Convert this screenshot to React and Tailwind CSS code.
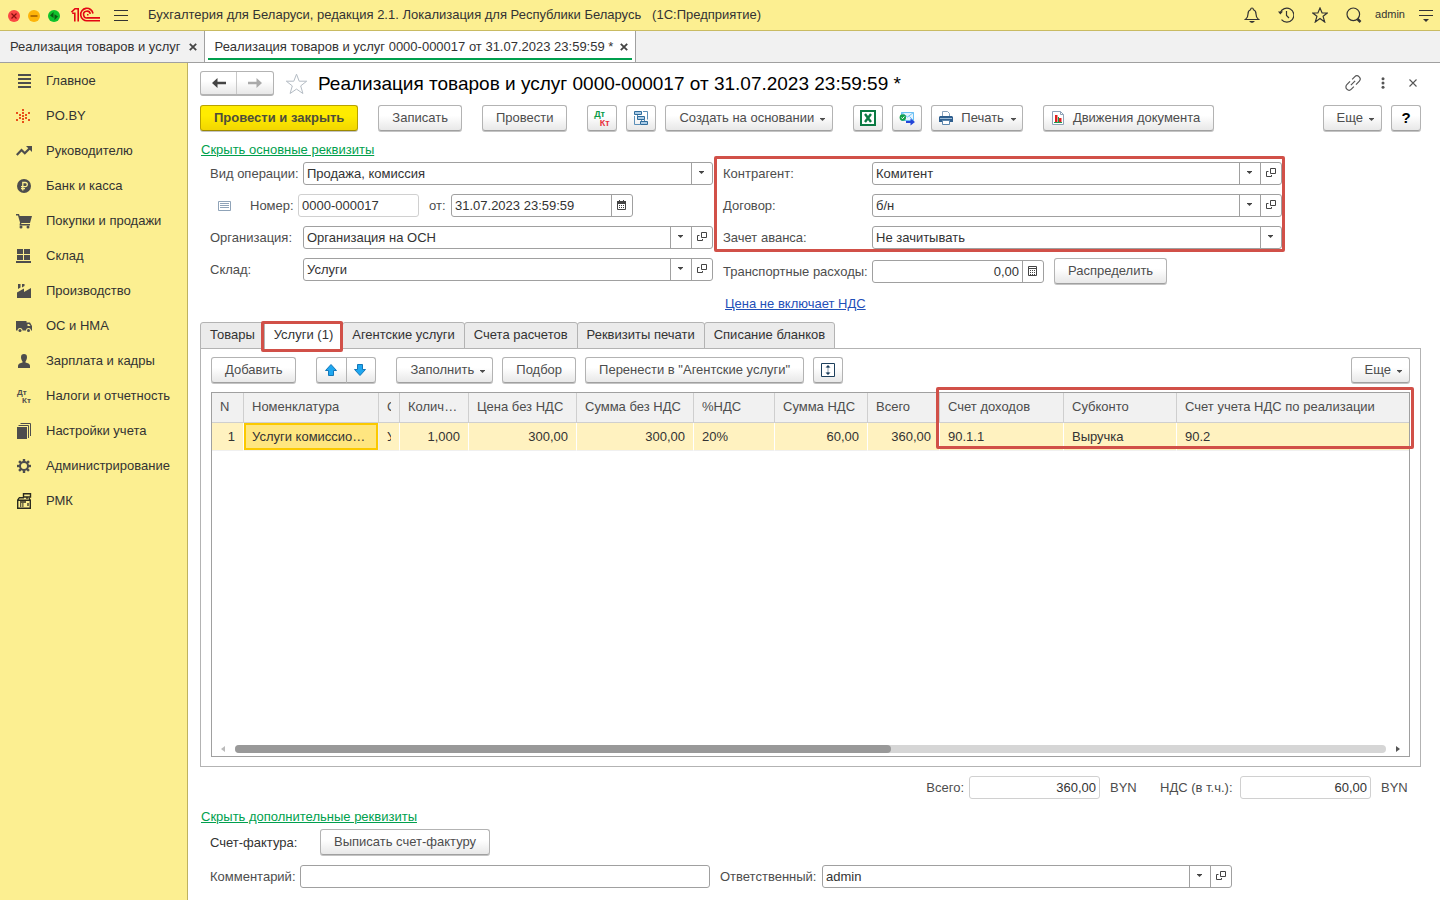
import React from "react";

/* ---------- icons ---------- */

const Ico = ({ children, s = 16, className = "" }) => (
  <svg width={s} height={s} viewBox={`0 0 ${s} ${s}`} className={`shrink-0 ${className}`} aria-hidden="true">
    {children}
  </svg>
);

const Caret = ({ className = "" }) => (
  <svg width="5" height="3" viewBox="0 0 5 3" className={`shrink-0 ${className}`} aria-hidden="true">
    <path d="M0 0h5v.5L2.500 3 0 .5z" fill="currentColor" />
  </svg>
);

const OpenIcon = () => (
  <svg width="10" height="9" viewBox="0 0 10 9" fill="none" stroke="#444" aria-hidden="true">
    <path d="M4.500 0.500h5v5h-5zM2.500 3.500h-2v5h5v-1.500" />
  </svg>
);

const Logo = () => (
  <svg width="30" height="16" viewBox="0 0 30 16" fill="none" stroke="#e30613" strokeWidth="1.600" aria-label="1С">
    <path d="M0.500 5.200 4 1.800h3.200V14.500M1.200 6.200h2.600V14.500" />
    <path d="M22 6.500A6.200 6.200 0 1 0 16.500 13.700H29" />
    <path d="M19.300 6.900A3.400 3.400 0 1 0 16.500 10.900H29" />
    <path d="M17.500 7.800h-1.500" />
  </svg>
);

const DtKt = ({ top, bottom, s = 16 }) => (
  <svg width={s} height={s} viewBox="0 0 16 16" className="shrink-0" aria-hidden="true" fontFamily="Liberation Sans, Arial, sans-serif" fontWeight="700" fontSize="8">
    <text x="1" y="7" fill={top}>Дт</text>
    <text x="6" y="15" fill={bottom}>Кт</text>
  </svg>
);

const PO_DOTS = [[0, 3], [0, 10], [3, 5], [3, 8], [6, 0], [6, 3], [6, 6], [6, 9], [6, 12], [9, 5], [9, 8], [12, 3], [12, 10]];
const TEETH = [0, 45, 90, 135, 180, 225, 270, 315];

const icons = {
  main: <Ico><path d="M2 1h13v2H2zM2 5h13v2H2zM2 9h13v2H2zM2 13h13v2H2z" fill="#4d4d4d" /></Ico>,
  po: <Ico>{PO_DOTS.map(([x, y]) => <rect key={`${x}-${y}`} x={x} y={y + 1} width="2" height="2" fill="#e8501a" />)}</Ico>,
  trend: <Ico><path d="M0.800 12 5.500 7l3.300 3.300L14 5" fill="none" stroke="#4d4d4d" strokeWidth="2.200" /><path d="M10 3h6v6z" fill="#4d4d4d" /></Ico>,
  bank: <Ico><circle cx="8" cy="8" r="7" fill="#4d4d4d" /><path d="M6.800 12.500V4.500h2.400a2 2 0 0 1 0 4.200H5M5 10.700h4" fill="none" stroke="#fcef91" strokeWidth="1.300" /></Ico>,
  cart: <Ico><path d="M0 1h3l.7 2H16l-2 7H5.500l-.4 1H14v1.400H3.500L4 9.500 2 2.400H0z" fill="#4d4d4d" /><circle cx="5" cy="14" r="1.500" fill="#4d4d4d" /><circle cx="12" cy="14" r="1.500" fill="#4d4d4d" /></Ico>,
  stock: <Ico><path d="M1 1h6v5H1zM8 1h6v5H8zM1 7h6v5H1zM8 7h6v5H8zM0 13h15v2H0z" fill="#4d4d4d" /></Ico>,
  factory: <Ico><path d="M1 15V9.500L8 5.500v3.500L15 5v10zM2 1h2.500v3.500L2 6zM6 1h2.500v2L6 4.500z" fill="#4d4d4d" /></Ico>,
  truck: <Ico><path d="M0 3h10.500v1.500h3.500L16 8v4.500H0z" fill="#4d4d4d" /><path d="M11.500 6H13l1.500 2h-3z" fill="#fcef91" /><circle cx="4" cy="12.500" r="2.500" fill="#fcef91" /><circle cx="12.500" cy="12.500" r="2.500" fill="#fcef91" /><circle cx="4" cy="12.500" r="1.500" fill="#4d4d4d" /><circle cx="12.500" cy="12.500" r="1.500" fill="#4d4d4d" /></Ico>,
  person: <Ico><path d="M8 1a3 3.300 0 0 1 3 3.300C11 6.500 9.800 8 9.500 8.500v1c2 .4 4.500 1.200 4.500 3.200V15H2v-2.300c0-2 2.500-2.800 4.500-3.200v-1C6.200 8 5 6.500 5 4.300A3 3.300 0 0 1 8 1z" fill="#4d4d4d" /></Ico>,
  tax: <DtKt top="#4d4d4d" bottom="#4d4d4d" />,
  books: <Ico><path d="M1 4h10v12H1z" fill="#4d4d4d" /><path d="M2.500 2.500h10V15M4.500 0.500h10V13" fill="none" stroke="#4d4d4d" /></Ico>,
  gear: (
    <Ico>
      <circle cx="8" cy="8" r="4" fill="none" stroke="#4d4d4d" strokeWidth="2" />
      {TEETH.map((a) => <path key={a} d="M6.800 1h2.400v3H6.800z" transform={`rotate(${a} 8 8)`} fill="#4d4d4d" />)}
    </Ico>
  ),
  pos: (
    <Ico>
      <path d="M7.500 .7h7v3.300h-7zM11 4v2M3 4.700h5M1.700 7.200h12.600v8H1.700zM1.700 7.500 3 4.700M14.300 7.500 13 5" fill="none" stroke="#2b2b1f" strokeWidth="1.400" />
      <path d="M4 9h6M4 11h1.300M6.200 11h1.300M4 13h1.300M6.200 13h1.300M12 10v3" stroke="#2b2b1f" strokeWidth="1.300" />
    </Ico>
  ),
};

const NAV = [
  ["main", "Главное"], ["po", "PO.BY"], ["trend", "Руководителю"], ["bank", "Банк и касса"],
  ["cart", "Покупки и продажи"], ["stock", "Склад"], ["factory", "Производство"], ["truck", "ОС и НМА"],
  ["person", "Зарплата и кадры"], ["tax", "Налоги и отчетность"], ["books", "Настройки учета"],
  ["gear", "Администрирование"], ["pos", "РМК"],
];

/* ---------- controls ---------- */

const BTN_SHAPE = "mb-px flex h-[26px] shrink-0 items-center justify-center whitespace-nowrap rounded-[3px] border pb-px shadow-[0_1px_0_#c4c4c4]";
const BTN = `${BTN_SHAPE} border-[#b3b3b3] border-b-[#a0a0a0] bg-linear-to-b from-white from-40% to-[#e8e8e8] text-[#4d4d4d]`;

const Btn = ({ children, className = "px-[13px]", ...rest }) => (
  <button type="button" className={`${BTN} ${className}`} {...rest}>{children}</button>
);

const MenuBtn = ({ children }) => (
  <Btn className="gap-[6px] pl-[13px] pr-[7px]">{children}<Caret className="mt-[4px]" /></Btn>
);

const BOX = "h-[23px] min-w-0 overflow-hidden rounded-[3px] border border-[#a0a0a0] bg-white text-[#333]";

const SelectField = ({ id, value, open, className = "" }) => (
  <div className={`flex ${BOX} ${className}`}>
    <div className="grid min-w-0 flex-1 grid-cols-[1fr_21px]">
      <select id={id} defaultValue={value} className="col-start-1 col-end-3 row-start-1 h-[21px] w-full appearance-none bg-transparent pl-[3px] pr-6 outline-none">
        <option>{value}</option>
      </select>
      <span className="pointer-events-none col-start-2 row-start-1 flex items-center justify-center border-l border-[#a0a0a0] pb-[2px] pr-px text-[#444]">
        <Caret />
      </span>
    </div>
    {open && (
      <button type="button" aria-label="Открыть" className="flex w-[21px] items-center justify-center border-l border-[#a0a0a0] pb-[2px]">
        <OpenIcon />
      </button>
    )}
  </div>
);

const InputField = ({ id, value, icon, label, className = "", inputClass = "" }) => (
  <div className={`flex ${BOX} ${className}`}>
    <input id={id} defaultValue={value} className={`w-full min-w-0 flex-1 bg-transparent px-[3px] outline-none ${inputClass}`} />
    {icon && (
      <button type="button" aria-label={label} className="flex w-[21px] shrink-0 items-center justify-center border-l border-[#a0a0a0] pb-[2px] pr-px">{icon}</button>
    )}
  </div>
);

const ReadOnly = ({ id, value, className = "" }) => (
  <input id={id} readOnly value={value} className={`h-[23px] min-w-0 rounded-[3px] border border-[#d0d0d0] bg-white px-[3px] text-[#333] outline-none ${className}`} />
);

const Calendar = () => (
  <svg width="9" height="10" viewBox="0 0 9 10" aria-hidden="true">
    <path d="M0.500 2.500h8v7h-8z" fill="none" stroke="#444" />
    <path d="M0 1h9v3H0zM2 0h1v1H2zM6 0h1v1H6zM2 5h1v1H2zM4 5h1v1H4zM6 5h1v1H6zM2 7h1v1H2zM4 7h1v1H4zM6 7h1v1H6z" fill="#444" />
  </svg>
);

const Calc = () => (
  <svg width="9" height="10" viewBox="0 0 9 10" aria-hidden="true">
    <path d="M0.500 0.500h8v9h-8zM0 2.500h9" fill="none" stroke="#444" />
    <path d="M2 4h1v1H2zM4 4h1v1H4zM6 4h1v1H6zM2 6h1v1H2zM4 6h1v1H4zM6 6h1v1H6zM2 8h1v1H2zM4 8h1v1H4zM6 8h1v1H6z" fill="#444" />
  </svg>
);

const MARK = "pointer-events-none absolute border-[3px] border-[#d15048] rounded-[2px]";

/* ---------- page parts ---------- */

function TopBar() {
  return (
    <header className="flex h-[31px] items-center border-b border-[#c9bb62] bg-[#fcef91] pl-2 pr-[7px] text-[#333]">
      <div className="flex gap-2 pt-px">
        <button type="button" aria-label="Закрыть" className="block">
          <svg width="12" height="12" viewBox="0 0 12 12"><circle cx="6" cy="6" r="6" fill="#fa4844" /><path d="m3.500 3.500 5 5m0-5-5 5" stroke="#8a1010" strokeWidth="1.200" /></svg>
        </button>
        <button type="button" aria-label="Свернуть" className="block">
          <svg width="12" height="12" viewBox="0 0 12 12"><circle cx="6" cy="6" r="6" fill="#fdb40a" /><path d="M2.500 6h7" stroke="#9a5a00" strokeWidth="1.500" /></svg>
        </button>
        <button type="button" aria-label="Развернуть" className="block">
          <svg width="12" height="12" viewBox="0 0 12 12"><circle cx="6" cy="6" r="6" fill="#0fc22c" /><path d="M5.500 2v6L2 5.500zM6.500 10V4.200L10 6.500z" fill="#0a5a12" /></svg>
        </button>
      </div>
      <div className="ml-[11px]"><Logo /></div>
      <button type="button" aria-label="Меню" className="ml-[13px] pt-px">
        <svg width="14" height="12" viewBox="0 0 14 12" stroke="#333"><path d="M0 .5h14M0 5.500h14M0 10.500h14" /></svg>
      </button>
      <div className="ml-5 flex-1 truncate whitespace-pre pb-px">Бухгалтерия для Беларуси, редакция 2.1. Локализация для Республики Беларусь   (1С:Предприятие)</div>
      <div className="flex items-center gap-[18px]">
        <button type="button" aria-label="Уведомления">
          <Ico><path d="M1.500 12.500h13c-2-1.500-2.500-3-2.500-5.500 0-2-1.200-3.700-2.500-4.200C9.300 1.500 9 1 8 1s-1.300.5-1.500 1.800C5.200 3.300 4 5 4 7c0 2.500-.5 4-2.500 5.500z" fill="none" stroke="#333" strokeWidth="1.200" /><path d="M5 14h6l-2 1.800H7z" fill="#333" /></Ico>
        </button>
        <button type="button" aria-label="История">
          <Ico><path d="M2.200 6A7 7 0 1 1 3.500 12.700" fill="none" stroke="#333" strokeWidth="1.200" /><path d="M0 4.500h5L2.300 7.500z" fill="#333" /><path d="M8.500 4v4.500l2.500 2.500" fill="none" stroke="#333" strokeWidth="1.200" /></Ico>
        </button>
        <button type="button" aria-label="Избранное">
          <Ico><path d="m8 1 2.100 5h5.200l-4.200 3.300L12.700 15 8 11.600 3.300 15l1.600-5.700L.7 6h5.200z" fill="none" stroke="#333" strokeWidth="1.200" /></Ico>
        </button>
        <button type="button" aria-label="Поиск">
          <Ico><circle cx="7.300" cy="7.300" r="6.300" fill="none" stroke="#333" strokeWidth="1.200" /><path d="m11.500 12 3 3" stroke="#333" strokeWidth="2.500" /></Ico>
        </button>
      </div>
      <span className="ml-[13px] pb-[3px] text-[11px] leading-4">admin</span>
      <button type="button" aria-label="Настройки окна" className="ml-[14px] pt-px">
        <svg width="14" height="14" viewBox="0 0 14 14"><path d="M0 1.500h14M0 6.500h14" stroke="#333" strokeWidth="1.200" /><path d="M4 10h6l-3 3z" fill="#333" /></svg>
      </button>
    </header>
  );
}

function CloseX() {
  return (
    <button type="button" aria-label="Закрыть вкладку">
      <svg width="8" height="8" viewBox="0 0 8 8"><path d="m.8.8 6.400 6.400m0-6.400L.8 7.200" stroke="#444" strokeWidth="1.800" /></svg>
    </button>
  );
}

function WindowTabs() {
  return (
    <div className="flex h-8 border-b border-[#a0a0a0] bg-[#f1f1f1] text-[#333]">
      <div className="flex items-center gap-2 border-r border-[#a0a0a0] pl-[10px] pr-[7px]">
        <span>Реализация товаров и услуг</span><CloseX />
      </div>
      <div className="flex flex-col border-r border-[#a0a0a0] bg-white px-[3px] pb-[2px]">
        <div className="flex flex-1 items-center gap-[7px] border-b-2 border-[#009f4d] pl-[7px] pr-[4px] pt-1">
          <span>Реализация товаров и услуг 0000-000017 от 31.07.2023 23:59:59 *</span><CloseX />
        </div>
      </div>
    </div>
  );
}

function Sidebar() {
  return (
    <nav className="w-[188px] shrink-0 border-r border-[#bfb260] bg-[#fcef91]">
      {NAV.map(([icon, text]) => (
        <a key={text} href="#" className="flex h-[35px] items-center gap-[14px] pl-4 text-[#333]">
          {icons[icon]}
          <span>{text}</span>
        </a>
      ))}
    </nav>
  );
}

function TitleRow() {
  return (
    <div className="flex h-[25px] items-center">
      <div className="flex h-[25px] rounded-[3px] border border-b-2 border-[#b3b3b3] bg-linear-to-b from-white from-40% to-[#e8e8e8]">
        <button type="button" aria-label="Назад" className="flex w-9 items-center justify-center border-r border-[#c8c8c8]">
          <svg width="14" height="10" viewBox="0 0 14 10"><path d="M0 5 5.500 0v3.700H14v2.600H5.500V10z" fill="#444" /></svg>
        </button>
        <button type="button" aria-label="Вперед" className="flex w-9 items-center justify-center">
          <svg width="14" height="10" viewBox="0 0 14 10"><path d="M14 5 8.500 0v3.700H0v2.600h8.500V10z" fill="#aaa" /></svg>
        </button>
      </div>
      <button type="button" aria-label="В избранное" className="ml-[11px]">
        <svg width="23" height="22" viewBox="0 0 23 22"><path d="m11.500 1.200 2.700 7h7.500l-6 4.700 2.200 7.600-6.400-4.400-6.400 4.400 2.200-7.600-6-4.700h7.500z" fill="#fff" stroke="#b4bcc4" /></svg>
      </button>
      <h1 className="ml-[10px] flex-1 truncate text-[19px] leading-6 text-black">Реализация товаров и услуг 0000-000017 от 31.07.2023 23:59:59 *</h1>
      <div className="flex items-center pb-[2px] pr-[3px]">
        <button type="button" aria-label="Ссылка">
          <Ico><g transform="rotate(-45 8 8)" fill="none" stroke="#555" strokeWidth="1.200"><path d="M7 4.800H2.500a3.200 3.200 0 0 0 0 6.400H6M9 11.200h4.500a3.200 3.200 0 0 0 0-6.400H10M5 8h6" /></g></Ico>
        </button>
        <button type="button" aria-label="Дополнительно" className="ml-5">
          <svg width="4" height="12" viewBox="0 0 4 12" fill="#555"><circle cx="2" cy="1.700" r="1.500" /><circle cx="2" cy="6" r="1.500" /><circle cx="2" cy="10.300" r="1.500" /></svg>
        </button>
        <button type="button" aria-label="Закрыть" className="ml-6 mr-px">
          <svg width="8" height="8" viewBox="0 0 8 8" stroke="#555" strokeWidth="1.100"><path d="m.5.5 7 7m0-7-7 7" /></svg>
        </button>
      </div>
    </div>
  );
}

function CommandBar() {
  return (
    <div className="mt-[9px] flex gap-5">
      <button type="button" className={`${BTN_SHAPE} border-[#b8a200] border-b-[#9c8900] bg-linear-to-b from-[#ffec00] from-40% to-[#f2d600] px-[13px] font-bold text-[#4d4d3a]`}>
        Провести и закрыть
      </button>
      <Btn>Записать</Btn>
      <Btn>Провести</Btn>
      <div className="flex gap-[9px]">
        <Btn className="w-[30px]" aria-label="Дт Кт"><DtKt top="#0a9a48" bottom="#e8303c" s={18} /></Btn>
        <Btn className="w-[30px]" aria-label="Структура подчиненности">
          <Ico>
            <path d="M10 1.500h4.500v8M1.500 6v8.500H7M4.500 4v3M11.500 9.500v2.500M8.500 9v2.500" fill="none" stroke="#5b8fb8" />
            <path d="M1.500 1.500h7v3h-7zM4.500 6.500h7v3h-7zM7.500 11.500h7v3h-7z" fill="#a9cbe6" stroke="#2f6c9c" />
          </Ico>
        </Btn>
        <MenuBtn>Создать на основании</MenuBtn>
      </div>
      <div className="flex gap-[9px]">
        <Btn className="w-[30px]" aria-label="Excel">
          <Ico><path d="M1 1h14v14H1z" fill="#fff" stroke="#0b7a43" strokeWidth="2" /><path d="m5 4 6 8m0-8-6 8" stroke="#0b7a43" strokeWidth="2.400" /></Ico>
        </Btn>
        <Btn className="w-[30px]" aria-label="Отправить">
          <Ico><path d="M2.500 2.500h12v8h-12z" fill="#e4f3fd" stroke="#6cc0f4" /><path d="m2.500 2.500 6 4.500 6-4.500M14.500 10.500l-4-4" fill="none" stroke="#6cc0f4" /><circle cx="3.800" cy="7.500" r="3.200" fill="#12a04a" /><path d="m2.500 7.500 1 1.200 1.800-2.200" fill="none" stroke="#fff" /><path d="M7 11h4.500V8.500L16 12l-4.500 3.500V13H7z" fill="#2344d8" /></Ico>
        </Btn>
        <Btn className="gap-[7px] pl-[6px] pr-[6px]">
          <Ico><path d="M4.500 6V1.500h5l2 2V6" fill="#fff" stroke="#8aa3bd" /><path d="M2 6h12l1 1v5H1V7z" fill="#2f5f8f" /><path d="M2 8h12v1H2z" fill="#9dbbd6" /><path d="M4.500 10.500h7v4h-7z" fill="#fff" stroke="#5c86ad" /></Ico>
          <span>Печать</span>
          <Caret className="mt-[4px]" />
        </Btn>
      </div>
      <Btn className="gap-[7px] pl-[6px] pr-[13px]">
        <Ico><path d="M2.500 1.500h8l3 3v10h-11z" fill="#fff" stroke="#8fa3b8" /><path d="M10.500 1.500v3h3" fill="none" stroke="#8fa3b8" /><path d="M5 5h2.500v7H5z" fill="#e02020" /><path d="M8 7h1v5H8z" fill="#1d9a4c" /><path d="M9 8h2.500v4H9z" fill="#e02020" /><path d="M4 12h8v1H4z" fill="#1d9a4c" /></Ico>
        <span>Движения документа</span>
      </Btn>
      <div className="ml-auto flex gap-[9px]">
        <MenuBtn>Еще</MenuBtn>
        <Btn className="w-[30px] text-[15px] font-bold text-black">?</Btn>
      </div>
    </div>
  );
}

const Label = ({ htmlFor, children, className }) => (
  <label htmlFor={htmlFor} className={`shrink-0 whitespace-nowrap text-[#4d4d4d] ${className}`}>{children}</label>
);

function Details() {
  return (
    <div className="mt-1 grid grid-cols-[513fr_559fr_129fr] gap-x-[10px]">
      <div className="flex flex-col gap-[9px] pl-[10px]">
        <div className="flex items-center">
          <Label htmlFor="op" className="w-[93px]">Вид операции:</Label>
          <SelectField id="op" value="Продажа, комиссия" className="flex-1" />
        </div>
        <div className="flex items-center">
          <svg width="13" height="10" viewBox="0 0 13 10" className="ml-2 shrink-0" aria-hidden="true"><path d="M.5.5h12v9H.5z" fill="#fff" stroke="#8fa3b8" /><path d="M2 2.500h9M2 4.500h9M2 6.500h9" stroke="#8fa3b8" /></svg>
          <Label htmlFor="num" className="ml-[19px] w-12">Номер:</Label>
          <ReadOnly id="num" value="0000-000017" className="w-[121px]" />
          <Label htmlFor="date" className="ml-[10px] w-[22px]">от:</Label>
          <InputField id="date" value="31.07.2023 23:59:59" icon={<Calendar />} label="Календарь" className="w-[182px]" />
        </div>
        <div className="flex items-center">
          <Label htmlFor="org" className="w-[93px]">Организация:</Label>
          <SelectField id="org" value="Организация на ОСН" open className="flex-1" />
        </div>
        <div className="flex items-center">
          <Label htmlFor="wh" className="w-[93px]">Склад:</Label>
          <SelectField id="wh" value="Услуги" open className="flex-1" />
        </div>
      </div>
      <div className="flex flex-col gap-[9px]">
        <div className="relative flex flex-col gap-[9px]">
          <div className="flex items-center">
            <Label htmlFor="contr" className="w-[149px]">Контрагент:</Label>
            <SelectField id="contr" value="Комитент" open className="flex-1" />
          </div>
          <div className="flex items-center">
            <Label htmlFor="deal" className="w-[149px]">Договор:</Label>
            <SelectField id="deal" value="б/н" open className="flex-1" />
          </div>
          <div className="flex items-center">
            <Label htmlFor="adv" className="w-[149px]">Зачет аванса:</Label>
            <SelectField id="adv" value="Не зачитывать" className="flex-1" />
          </div>
          <div className={`${MARK} -bottom-[3px] -left-[9px] -right-[3px] -top-[6px]`} />
        </div>
        <div className="flex items-center">
          <Label htmlFor="trans" className="w-[149px]">Транспортные расходы:</Label>
          <InputField id="trans" value="0,00" icon={<Calc />} label="Калькулятор" className="w-[172px]" inputClass="text-right" />
          <Btn className="ml-[10px] px-[13px]">Распределить</Btn>
        </div>
        <a href="#" className="ml-[2px] mt-[2px] self-start text-[#1f4fb8] underline">Цена не включает НДС</a>
      </div>
    </div>
  );
}

const TABS = ["Товары", "Услуги (1)", "Агентские услуги", "Счета расчетов", "Реквизиты печати", "Списание бланков"];

function TabStrip() {
  return (
    <div role="tablist" className="relative -mb-px mt-[10px] flex">
      {TABS.map((t, i) =>
        i === 1 ? (
          <button key={t} type="button" role="tab" aria-selected="true" className="relative -ml-px h-[27px] whitespace-nowrap border border-b-0 border-[#b3b3b3] bg-white px-[9px] pb-[2px] text-[#333]">
            {t}
            <span className={`${MARK} -bottom-[3px] -left-[4px] -right-px -top-[2px]`} />
          </button>
        ) : (
          <button key={t} type="button" role="tab" aria-selected="false" className="-ml-px h-[27px] whitespace-nowrap rounded-t-[3px] border border-[#b3b3b3] bg-[#ebebeb] px-[9px] pb-[2px] text-[#333] first:ml-0">
            {t}
          </button>
        )
      )}
    </div>
  );
}

const COLS = [
  ["N", "1", "w-[32px]", true], ["Номенклатура", "Услуги комиссио…", "w-[135px]"], ["С", "У", "w-[21px]"],
  ["Колич…", "1,000", "w-[69px]", true], ["Цена без НДС", "300,00", "w-[108px]", true], ["Сумма без НДС", "300,00", "w-[117px]", true],
  ["%НДС", "20%", "w-[81px]"], ["Сумма НДС", "60,00", "w-[93px]", true], ["Всего", "360,00", "w-[72px]", true],
  ["Счет доходов", "90.1.1", "w-[124px]"], ["Субконто", "Выручка", "w-[113px]"], ["Счет учета НДС по реализации", "90.2", ""],
];

function ItemsTable() {
  return (
    <div className="relative mt-2 flex min-h-[120px] flex-1 flex-col border border-[#a0a0a0]">
      <table className="w-full table-fixed border-separate border-spacing-0">
        <colgroup>{COLS.map((c) => <col key={c[0]} className={c[2]} />)}</colgroup>
        <thead>
          <tr className="h-[30px]">
            {COLS.map(([h], i) => (
              <th key={h} className={`overflow-hidden whitespace-nowrap border-b border-r border-[#cfcfcf] bg-[#f1f1f1] pb-[2px] pl-2 pt-0 text-left font-normal text-[#4d4d4d] last:border-r-0 ${i === 2 ? "pr-2" : "pr-1"}`}>
                {i === 2 ? <span className="block overflow-hidden">{h}</span> : h}
              </th>
            ))}
          </tr>
        </thead>
        <tbody>
          <tr className="h-[28px]">
            {COLS.map(([h, v, , right], i) =>
              i === 1 ? (
                <td key={h} className="border-b border-r border-[#f0f0f0] bg-[#fff2c0] p-0 text-[#333]">
                  <span className="block h-[27px] overflow-hidden whitespace-nowrap border-2 border-[#fbc900] bg-[#ffe680] pl-[6px] leading-[23px]">{v}</span>
                </td>
              ) : (
                <td key={h} className={`overflow-hidden whitespace-nowrap border-b border-r border-b-[#f0f0f0] border-r-white bg-[#fff2c0] py-0 pl-2 text-[#333] last:border-r-0 ${right ? "pr-2 text-right" : "pr-2"}`}>
                  {i === 2 ? <span className="block overflow-hidden">{v}</span> : v}
                </td>
              )
            )}
          </tr>
        </tbody>
      </table>
      <div className="mt-auto flex items-center pb-[3px] pl-[9px] pr-[9px]">
        <svg width="4" height="6" viewBox="0 0 4 6" className="shrink-0"><path d="M4 0v6L0 3z" fill="#bbb" /></svg>
        <div className="ml-[10px] mr-[10px] h-2 flex-1 rounded-full bg-[#d6d6d6]">
          <div className="h-2 w-[57%] rounded-full bg-[#999]" />
        </div>
        <svg width="4" height="6" viewBox="0 0 4 6" className="shrink-0"><path d="M0 0v6l4-3z" fill="#555" /></svg>
      </div>
      <div className={`${MARK} -right-[5px] -top-[6px] left-[724px] h-[62px]`} />
    </div>
  );
}

const Arrow = ({ down }) => (
  <svg width="12" height="12" viewBox="0 0 12 12" aria-hidden="true">
    <path d="M6 .5 11.500 6.500H8.500v5h-5v-5H.5z" fill="#1ea7f0" stroke="#1477b8" transform={down ? "rotate(180 6 6)" : undefined} />
  </svg>
);

function Panel() {
  return (
    <section className="flex flex-1 flex-col border border-[#b3b3b3] px-[10px] pb-[9px] pt-2">
      <div className="flex gap-[9px]">
        <Btn>Добавить</Btn>
        <div className="mx-[11px] flex">
          <Btn className="w-[31px] rounded-r-none pr-[2px]" aria-label="Вверх"><Arrow /></Btn>
          <Btn className="-ml-px w-[30px] rounded-l-none pr-[2px]" aria-label="Вниз"><Arrow down /></Btn>
        </div>
        <MenuBtn>Заполнить</MenuBtn>
        <Btn>Подбор</Btn>
        <Btn>Перенести в "Агентские услуги"</Btn>
        <Btn className="w-[30px]" aria-label="Высота строк">
          <Ico><path d="M1.500 1.500h13v13h-13z" fill="#fff" stroke="#1d3f5c" /><path d="M8 5v1.500M8 7.500v1M8 9.500V11" stroke="#1d3f5c" /><path d="M5.500 5.500 8 3l2.500 2.500zM5.500 10.500 8 13l2.500-2.500z" fill="#1d3f5c" /></Ico>
        </Btn>
        <div className="ml-auto"><MenuBtn>Еще</MenuBtn></div>
      </div>
      <ItemsTable />
    </section>
  );
}

function Footer() {
  return (
    <>
      <div className="mt-[9px] flex items-center justify-end pr-[13px] text-[#4d4d4d]">
        <Label htmlFor="total" className="mr-[5px]">Всего:</Label>
        <ReadOnly id="total" value="360,00" className="w-[131px] text-right" />
        <span className="ml-[10px] w-[27px]">BYN</span>
        <Label htmlFor="vat" className="ml-[23px] w-20">НДС (в т.ч.):</Label>
        <ReadOnly id="vat" value="60,00" className="w-[131px] text-right" />
        <span className="ml-[10px] w-[27px]">BYN</span>
      </div>
      <a href="#" className="ml-px mt-[10px] self-start text-[#009f4d] underline">Скрыть дополнительные реквизиты</a>
      <div className="mt-1 flex items-center pl-[10px]">
        <span className="w-[110px] text-[#333]">Счет-фактура:</span>
        <Btn>Выписать счет-фактуру</Btn>
      </div>
      <div className="mt-[9px] grid grid-cols-[90px_410fr_112px_410fr_189fr] items-center pl-[10px]">
        <Label htmlFor="comment" className="">Комментарий:</Label>
        <InputField id="comment" value="" />
        <Label htmlFor="resp" className="pl-[10px]">Ответственный:</Label>
        <SelectField id="resp" value="admin" open />
      </div>
    </>
  );
}

export default function App() {
  return (
    <div className="flex min-h-screen flex-col bg-white font-['Liberation_Sans',Arial,sans-serif] text-[13px] leading-4">
      <TopBar />
      <WindowTabs />
      <div className="flex flex-1">
        <Sidebar />
        <main className="flex min-w-0 flex-1 flex-col pb-3 pl-3 pr-[19px] pt-2">
          <TitleRow />
          <CommandBar />
          <a href="#" className="ml-px mt-[10px] self-start text-[#009f4d] underline">Скрыть основные реквизиты</a>
          <Details />
          <TabStrip />
          <Panel />
          <Footer />
        </main>
      </div>
    </div>
  );
}
